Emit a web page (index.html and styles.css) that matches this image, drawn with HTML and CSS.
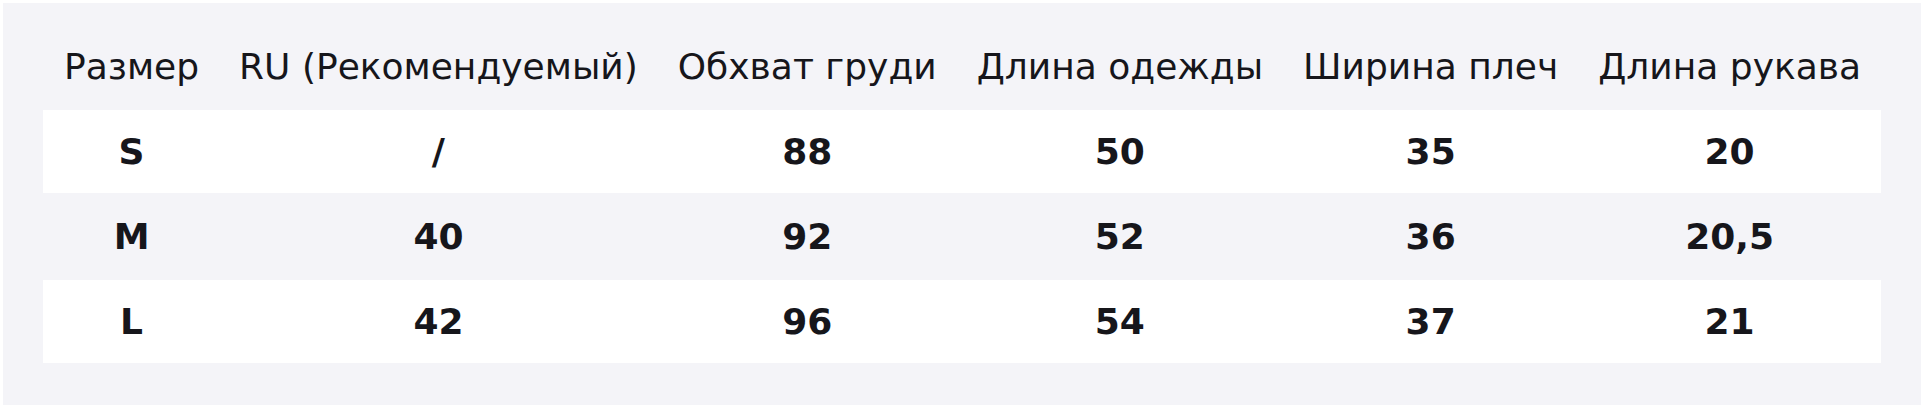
FILE: index.html
```html
<!DOCTYPE html>
<html lang="ru">
<head>
<meta charset="utf-8">
<title>Таблица размеров</title>
<link rel="stylesheet" href="styles.css">
</head>
<body>
<div class="panel">
  <table class="sizes">
    <thead>
      <tr class="head">
        <th>Размер</th>
        <th>RU (Рекомендуемый)</th>
        <th>Обхват груди</th>
        <th>Длина одежды</th>
        <th>Ширина плеч</th>
        <th>Длина рукава</th>
      </tr>
    </thead>
    <tbody>
      <tr class="row white">
        <td>S</td><td>/</td><td>88</td><td>50</td><td>35</td><td>20</td>
      </tr>
      <tr class="row grey">
        <td>M</td><td>40</td><td>92</td><td>52</td><td>36</td><td>20,5</td>
      </tr>
      <tr class="row white">
        <td>L</td><td>42</td><td>96</td><td>54</td><td>37</td><td>21</td>
      </tr>
    </tbody>
  </table>
</div>
</body>
</html>
```
FILE: styles.css
```css
html, body {
  margin: 0;
  padding: 0;
  background: #ffffff;
}
body {
  padding: 3px;
  font-family: "DejaVu Sans", "Noto Sans", sans-serif;
  color: #16161b;
}
.panel {
  background: #f4f4f8;
  height: 402px;
  box-sizing: border-box;
  padding: 20px 40px 0 40px;
}
.sizes {
  width: 100%;
  border-collapse: collapse;
  border-spacing: 0;
}
.sizes th,
.sizes td {
  text-align: center;
  vertical-align: middle;
  padding: 0 20px;
  font-size: 36px;
  line-height: 42px;
  white-space: nowrap;
}
.sizes th {
  font-weight: normal;
}
.sizes th:first-child,
.sizes td:first-child {
  padding-left: 21px;
}
.head {
  height: 87px;
}
.sizes td {
  font-weight: bold;
}
.row.white {
  height: 83px;
  background: #ffffff;
}
.row.grey {
  height: 87px;
  background: transparent;
}
```
